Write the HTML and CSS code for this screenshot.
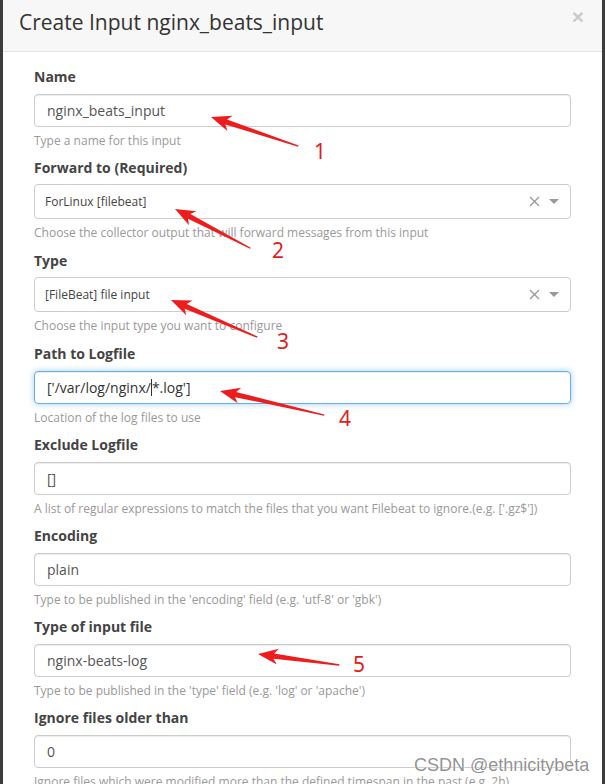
FILE: index.html
```html
<!DOCTYPE html>
<html lang="en">
<head>
<meta charset="utf-8">
<title>Create Input nginx_beats_input</title>
<link rel="stylesheet" href="styles.css">
</head>
<body>
<div class="modal">
  <div class="modal-header">
    <h4 class="modal-title">Create Input nginx_beats_input</h4>
    <button class="close" type="button">&times;</button>
  </div>
  <div class="modal-body">
    <div class="form-group">
      <label class="control-label">Name</label>
      <div class="form-control">nginx_beats_input</div>
      <span class="help-block">Type a name for this input</span>
    </div>
    <div class="form-group select-group">
      <label class="control-label">Forward to (Required)</label>
      <div class="select">
        <span class="select-value">ForLinux [filebeat]</span>
        <span class="select-clear"><svg width="11" height="11" viewBox="0 0 11 11"><path d="M1 1 L10 10 M10 1 L1 10" stroke="#999" stroke-width="1.3" fill="none"/></svg></span>
        <span class="select-arrow"></span>
      </div>
      <span class="help-block">Choose the collector output that will forward messages from this input</span>
    </div>
    <div class="form-group select-group">
      <label class="control-label">Type</label>
      <div class="select">
        <span class="select-value">[FileBeat] file input</span>
        <span class="select-clear"><svg width="11" height="11" viewBox="0 0 11 11"><path d="M1 1 L10 10 M10 1 L1 10" stroke="#999" stroke-width="1.3" fill="none"/></svg></span>
        <span class="select-arrow"></span>
      </div>
      <span class="help-block">Choose the input type you want to configure</span>
    </div>
    <div class="form-group">
      <label class="control-label">Path to Logfile</label>
      <div class="form-control focused">['/var/log/nginx/<span class="caret"></span>*.log']</div>
      <span class="help-block">Location of the log files to use</span>
    </div>
    <div class="form-group">
      <label class="control-label">Exclude Logfile</label>
      <div class="form-control">[]</div>
      <span class="help-block">A list of regular expressions to match the files that you want Filebeat to ignore.(e.g. ['.gz$'])</span>
    </div>
    <div class="form-group">
      <label class="control-label">Encoding</label>
      <div class="form-control">plain</div>
      <span class="help-block">Type to be published in the 'encoding' field (e.g. 'utf-8' or 'gbk')</span>
    </div>
    <div class="form-group">
      <label class="control-label">Type of input file</label>
      <div class="form-control">nginx-beats-log</div>
      <span class="help-block">Type to be published in the 'type' field (e.g. 'log' or 'apache')</span>
    </div>
    <div class="form-group">
      <label class="control-label">Ignore files older than</label>
      <div class="form-control">0</div>
      <span class="help-block">Ignore files which were modified more than the defined timespan in the past (e.g. 2h)</span>
    </div>
  </div>
</div>

<svg class="annotations" width="605" height="784" viewBox="0 0 605 784">
  <g fill="#ee1d1d">
    <polygon points="0,0 20,-8 16,-2.6 92,-0.7 92,0.7 16,2.6 20,8" transform="translate(211,117) rotate(18.4)"/>
    <polygon points="0,0 20,-8 16,-2.6 85,-0.7 85,0.7 16,2.6 20,8" transform="translate(175,209) rotate(27.5)"/>
    <polygon points="0,0 20,-8 16,-2.6 94,-0.7 94,0.7 16,2.6 20,8" transform="translate(171,300) rotate(23.3)"/>
    <polygon points="0,0 20,-8 16,-2.6 107,-0.7 107,0.7 16,2.6 20,8" transform="translate(220,391) rotate(13)"/>
    <polygon points="0,0 20,-8 16,-2.6 82,-0.7 82,0.7 16,2.6 20,8" transform="translate(258,654) rotate(7.7)"/>
  </g>
  <g class="anno-num" fill="#e01e1e">
    <text x="314" y="159">1</text>
    <text x="272" y="258">2</text>
    <text x="277" y="349">3</text>
    <text x="339" y="426">4</text>
    <text x="353" y="672">5</text>
  </g>
</svg>
<div class="watermark">CSDN @ethnicitybeta</div>
</body>
</html>
```

FILE: styles.css
```css
html, body {
  margin: 0;
  padding: 0;
}
body {
  width: 605px;
  height: 784px;
  overflow: hidden;
  background: #3c3c3c;
  position: relative;
  font-family: "Open Sans", "Noto Sans", sans-serif;
}
.modal {
  margin-left: 3px;
  width: 599px;
  background: #fff;
  min-height: 784px;
}
.modal-header {
  height: 52px;
  box-sizing: border-box;
  border-bottom: 1px solid #e5e5e5;
  background: #f7f7f7;
  display: flex;
  justify-content: space-between;
  align-items: flex-start;
  padding: 7px 18px 0 16px;
}
.modal-title {
  margin: 0;
  font-size: 21px;
  line-height: 30px;
  font-weight: 400;
  color: #333;
}
.close {
  border: 0;
  background: none;
  padding: 0;
  margin-top: -1px;
  font-family: "Liberation Sans", sans-serif;
  font-size: 21px;
  line-height: 21px;
  font-weight: bold;
  color: #000;
  opacity: 0.18;
}
.modal-body {
  padding: 15px 31px 0 31px;
}
.form-group {
  margin-bottom: 8px;
}
.select-group {
  margin-bottom: 9px;
}
.control-label {
  display: block;
  font-size: 14px;
  line-height: 20px;
  font-weight: 700;
  color: #444;
  margin-bottom: 7px;
}
.form-control {
  height: 33px;
  box-sizing: border-box;
  border: 1px solid #ccc;
  border-radius: 4px;
  padding: 0 12px;
  font-size: 14px;
  line-height: 31px;
  color: #555;
  box-shadow: inset 0 1px 1px rgba(0, 0, 0, 0.075);
}
.form-control.focused {
  border-color: #66afe9;
  box-shadow: inset 0 1px 1px rgba(0, 0, 0, 0.075), 0 0 6px rgba(102, 175, 233, 0.6);
  color: #333;
}
.caret {
  display: inline-block;
  width: 1px;
  height: 17px;
  background: #333;
  vertical-align: -3px;
}
.select-group .control-label {
  margin-bottom: 6px;
}
.select {
  height: 35px;
  box-sizing: border-box;
  border: 1px solid #ccc;
  border-radius: 4px;
  display: flex;
  align-items: center;
  padding: 0 11px 0 10px;
}
.select-value {
  flex: 1;
  font-size: 12px;
  color: #444;
}
.select-clear {
  display: flex;
  margin-right: 9px;
}
.select-arrow {
  width: 0;
  height: 0;
  border-top: 5px solid #999;
  border-left: 5px solid transparent;
  border-right: 5px solid transparent;
}
.help-block {
  display: block;
  margin-top: 5px;
  font-size: 12px;
  line-height: 18px;
  color: #999;
}
.annotations {
  position: absolute;
  top: 0;
  left: 0;
  pointer-events: none;
}
.anno-num {
  font-family: "Noto Sans", sans-serif;
  font-size: 21px;
}
.watermark {
  position: absolute;
  left: 414px;
  top: 755px;
  font-family: "Liberation Sans", sans-serif;
  font-size: 18px;
  color: rgba(110, 110, 110, 0.75);
  text-shadow: 0 0 2px #fff, 0 0 1px #fff;
  pointer-events: none;
}
```
